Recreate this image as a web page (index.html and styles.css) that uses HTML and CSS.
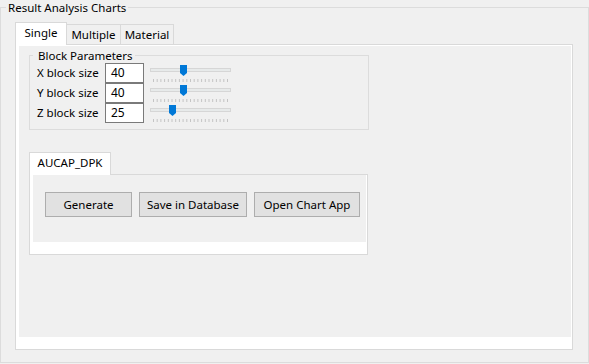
FILE: index.html
```html
<!DOCTYPE html>
<html>
<head>
<meta charset="utf-8">
<link rel="stylesheet" href="styles.css">
</head>
<body>
<div class="outer">
  <div class="outer-title">Result Analysis Charts</div>
  <div class="tabs main-tabs">
    <div class="tabstrip">
      <div class="tab sel t-single">Single</div>
      <div class="tab t-multiple">Multiple</div>
      <div class="tab t-material">Material</div>
    </div>
    <div class="pane main-pane">
      <div class="page main-page">
        <div class="group">
          <div class="group-title">Block Parameters</div>
          <div class="row">
            <span class="label">X block size</span>
            <span class="num">40</span>
            <svg class="slider" width="84" height="20" viewBox="0 0 84 20">
              <rect x="1.5" y="5.5" width="80" height="3" fill="#e7eaea" stroke="#d6d6d6"/>
              <g class="ticks"><path d="M4.5 16v3M8.2 16v3M11.9 16v3M15.6 16v3M19.3 16v3M23 16v3M26.7 16v3M30.4 16v3M34.1 16v3M37.8 16v3M41.5 16v3M45.2 16v3M48.9 16v3M52.6 16v3M56.3 16v3M60 16v3M63.7 16v3M67.4 16v3M71.1 16v3M74.8 16v3M78.5 16v3"/></g>
              <path d="M31 2h7v8l-3.5 3l-3.5-3z" fill="#0078d7"/>
            </svg>
          </div>
          <div class="row">
            <span class="label">Y block size</span>
            <span class="num">40</span>
            <svg class="slider" width="84" height="20" viewBox="0 0 84 20">
              <rect x="1.5" y="5.5" width="80" height="3" fill="#e7eaea" stroke="#d6d6d6"/>
              <g class="ticks"><path d="M4.5 16v3M8.2 16v3M11.9 16v3M15.6 16v3M19.3 16v3M23 16v3M26.7 16v3M30.4 16v3M34.1 16v3M37.8 16v3M41.5 16v3M45.2 16v3M48.9 16v3M52.6 16v3M56.3 16v3M60 16v3M63.7 16v3M67.4 16v3M71.1 16v3M74.8 16v3M78.5 16v3"/></g>
              <path d="M31 2h7v8l-3.5 3l-3.5-3z" fill="#0078d7"/>
            </svg>
          </div>
          <div class="row">
            <span class="label">Z block size</span>
            <span class="num">25</span>
            <svg class="slider" width="84" height="20" viewBox="0 0 84 20">
              <rect x="1.5" y="5.5" width="80" height="3" fill="#e7eaea" stroke="#d6d6d6"/>
              <g class="ticks"><path d="M4.5 16v3M8.2 16v3M11.9 16v3M15.6 16v3M19.3 16v3M23 16v3M26.7 16v3M30.4 16v3M34.1 16v3M37.8 16v3M41.5 16v3M45.2 16v3M48.9 16v3M52.6 16v3M56.3 16v3M60 16v3M63.7 16v3M67.4 16v3M71.1 16v3M74.8 16v3M78.5 16v3"/></g>
              <path d="M20 2h7v8l-3.5 3l-3.5-3z" fill="#0078d7"/>
            </svg>
          </div>
        </div>
        <div class="tabs sub-tabs">
          <div class="tabstrip">
            <div class="tab sel t-aucap">AUCAP_DPK</div>
          </div>
          <div class="pane sub-pane">
            <div class="page sub-page">
              <div class="buttons">
                <button class="btn b-gen">Generate</button>
                <button class="btn b-save">Save in Database</button>
                <button class="btn b-open">Open Chart App</button>
              </div>
            </div>
          </div>
        </div>
      </div>
    </div>
  </div>
</div>
</body>
</html>
```
FILE: styles.css
```css
* { box-sizing: border-box; }
html, body { margin: 0; padding: 0; }
body {
  background: #f0f0f0;
  font-family: "Noto Sans", "Liberation Sans", sans-serif;
  font-size: 11.5px;
  color: #000;
  width: 589px;
  height: 364px;
  overflow: hidden;
}
.outer {
  margin-top: 7px;
  width: 589px;
  height: 356px;
  border: 1px solid #dcdcdc;
}
.outer-title {
  width: fit-content;
  margin-top: -8px;
  margin-left: 5px;
  padding: 0 2px;
  height: 15px;
  line-height: 15px;
  background: #f0f0f0;
}
.main-tabs {
  margin-left: 14px;
  margin-top: 7px;
}
.tabstrip {
  display: flex;
  align-items: flex-end;
  height: 22px;
}
.tab {
  height: 20px;
  line-height: 19px;
  border: 1px solid #d9d9d9;
  border-bottom: none;
  border-left: none;
  text-align: center;
  background: #f0f0f0;
}
.tab.sel {
  height: 23px;
  line-height: 20px;
  margin-bottom: -1px;
  background: #fff;
  border-left: 1px solid #d9d9d9;
  position: relative;
  z-index: 1;
}
.t-single { width: 52px; }
.t-multiple { width: 54px; }
.t-material { width: 53px; }
.t-aucap { width: 82px; }
.pane {
  border: 1px solid #d9d9d9;
  background: #fff;
}
.main-pane {
  width: 558px;
  height: 306px;
  padding: 1px 1px 12px 3px;
}
.page {
  background: #f0f0f0;
  height: 100%;
  overflow: hidden;
}
.group {
  margin: 9px 0 0 10px;
  width: 340px;
  height: 75px;
  border: 1px solid #dcdcdc;
  padding-left: 7px;
}
.group-title {
  width: fit-content;
  margin-top: -8px;
  margin-left: -4px;
  padding: 0 2px 0 5px;
  height: 15px;
  line-height: 16px;
  background: #f0f0f0;
}
.row {
  display: flex;
  align-items: center;
  height: 20px;
}
.label {
  width: 68px;
  line-height: 20px;
}
.num {
  width: 39px;
  height: 20px;
  border: 1px solid #7a7a7a;
  background: #fff;
  padding-left: 5px;
  line-height: 18px;
  font-size: 12px;
}
.slider {
  margin-left: 5px;
  display: block;
}
.ticks path {
  stroke: #c4c4c4;
  stroke-width: 1;
}
.sub-tabs {
  margin-left: 10px;
  margin-top: 22px;
}
.sub-pane {
  width: 339px;
  height: 81px;
  padding: 0 1px 12px 3px;
}
.buttons {
  display: flex;
  gap: 7px;
  padding: 17px 0 0 12px;
}
.btn {
  height: 25px;
  border: 1px solid #adadad;
  background: #e1e1e1;
  font-family: inherit;
  font-size: 11.5px;
  color: #000;
  padding: 0;
  margin: 0;
}
.b-gen { width: 87px; }
.b-save { width: 108px; }
.b-open { width: 106px; }
```
